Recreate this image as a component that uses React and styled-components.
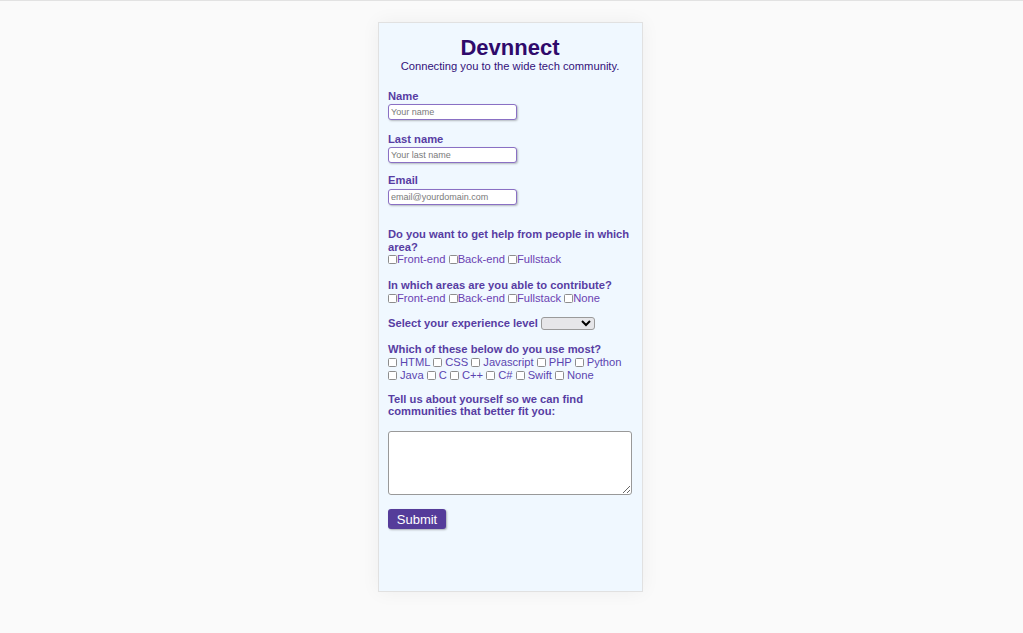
import React from 'react'
import styled, { createGlobalStyle } from 'styled-components'

const GlobalStyle = createGlobalStyle`
  html, body {
    margin: 0;
    padding: 0;
    background: #fafafa;
    font-family: "Liberation Sans", Arial, sans-serif;
  }
  body {
    border-top: 1px solid #e2e2e2;
  }
`

const Page = styled.div`
  display: flex;
  justify-content: center;
  padding: 21px 2px 40px 0;
`

const Card = styled.form`
  box-sizing: border-box;
  width: 265px;
  height: 570px;
  padding: 12px 10px 0 9px;
  background: #f0f8ff;
  border: 1px solid #e1e1e1;
  box-shadow: 0 0 18px rgba(0, 0, 0, 0.05);
  display: flex;
  flex-direction: column;
`

const Title = styled.h1`
  margin: 0;
  text-align: center;
  font-size: 22px;
  line-height: 25px;
  font-weight: bold;
  color: #2f0a6b;
`

const Subtitle = styled.p`
  margin: 0 0 16.5px;
  text-align: center;
  font-size: 11.2px;
  line-height: 13px;
  color: #33117a;
`

const Field = styled.div`
  display: flex;
  flex-direction: column;
  align-items: flex-start;
  margin-bottom: ${p => p.$gap ?? 12}px;
`

const Label = styled.label`
  font-size: 11.2px;
  line-height: 12.5px;
  font-weight: bold;
  color: #573da3;
  margin-bottom: ${p => p.$gap || 0}px;
`

const TextInput = styled.input`
  box-sizing: border-box;
  width: 129px;
  height: 16px;
  padding: 0 2px;
  border: 1px solid #8a70c4;
  border-radius: 3px;
  background: #fff;
  box-shadow: 1px 1px 2px rgba(0, 0, 0, 0.25);
  font-family: "Liberation Sans", Arial, sans-serif;
  font-size: 9px;
  color: #333;
  outline: none;
  &::placeholder {
    color: #7a7a7a;
  }
`

const Options = styled.div`
  font-size: 11.2px;
  line-height: 13px;
  color: ${p => p.$tone || '#6a42b2'};
`

const Option = styled.span`
  white-space: nowrap;
`

const Box = styled.input.attrs({ type: 'checkbox' })`
  appearance: none;
  box-sizing: border-box;
  width: 9px;
  height: 9px;
  margin: 0 ${p => (p.$spaced ? 3 : 0)}px 0 0;
  vertical-align: -1px;
  border: 1px solid #8d8d8d;
  border-radius: 1.5px;
  background: #fff;
  &:checked {
    background: #553c9a;
    border-color: #553c9a;
  }
`

const InlineRow = styled.div`
  display: flex;
  align-items: center;
  gap: 3px;
  margin-bottom: 13px;
`

const Select = styled.select`
  box-sizing: border-box;
  width: 54px;
  height: 13px;
  font-size: 6px;
  padding: 0;
  border: 1px solid #9a9a9a;
  border-radius: 3px;
  background: #e6e6e9;
`

const TextArea = styled.textarea`
  box-sizing: border-box;
  width: 244px;
  height: 64px;
  margin-top: 13px;
  border: 1px solid #999;
  border-radius: 3px;
  background: #fff;
  resize: vertical;
`

const Submit = styled.button`
  align-self: flex-start;
  width: 58px;
  height: 20px;
  margin-top: 14.5px;
  padding: 0;
  border: none;
  border-radius: 3px;
  background: #553c9a;
  color: #fff;
  font-family: "Liberation Sans", Arial, sans-serif;
  font-size: 13px;
  box-shadow: 1px 1px 2px rgba(0, 0, 0, 0.3);
`

const helpAreas = ['Front-end', 'Back-end', 'Fullstack']
const contribAreas = ['Front-end', 'Back-end', 'Fullstack', 'None']
const langs1 = ['HTML', 'CSS', 'Javascript', 'PHP', 'Python']
const langs2 = ['Java', 'C', 'C++', 'C#', 'Swift', 'None']

const CheckList = ({ items, spaced }) => (
  <>
    {items.map((item, i) => (
      <React.Fragment key={item}>
        <Option>
          <Box $spaced={spaced} />
          {item}
        </Option>
        {i < items.length - 1 ? ' ' : null}
      </React.Fragment>
    ))}
  </>
)

const App = () => {
  return (
    <>
      <GlobalStyle />
      <Page>
        <Card onSubmit={e => e.preventDefault()}>
          <Title>Devnnect</Title>
          <Subtitle>Connecting you to the wide tech community.</Subtitle>

          <Field $gap={13}>
            <Label $gap={2}>Name</Label>
            <TextInput placeholder="Your name" />
          </Field>
          <Field $gap={11}>
            <Label $gap={1.5}>Last name</Label>
            <TextInput placeholder="Your last name" />
          </Field>
          <Field $gap={23}>
            <Label $gap={2.5}>Email</Label>
            <TextInput placeholder="email@yourdomain.com" />
          </Field>

          <Field $gap={13}>
            <Label>Do you want to get help from people in which area?</Label>
            <Options>
              <CheckList items={helpAreas} />
            </Options>
          </Field>

          <Field $gap={12.5}>
            <Label>In which areas are you able to contribute?</Label>
            <Options>
              <CheckList items={contribAreas} />
            </Options>
          </Field>

          <InlineRow>
            <Label>Select your experience level</Label>
            <Select>
              <option></option>
              <option>Beginner</option>
              <option>Intermediate</option>
              <option>Advanced</option>
            </Select>
          </InlineRow>

          <Field $gap={11}>
            <Label>Which of these below do you use most?</Label>
            <Options $tone="#5b45b0">
              <CheckList items={langs1} spaced />
              <br />
              <CheckList items={langs2} spaced />
            </Options>
          </Field>

          <Label>Tell us about yourself so we can find communities that better fit you:</Label>
          <TextArea />
          <Submit type="submit">Submit</Submit>
        </Card>
      </Page>
    </>
  )
}

export default App
